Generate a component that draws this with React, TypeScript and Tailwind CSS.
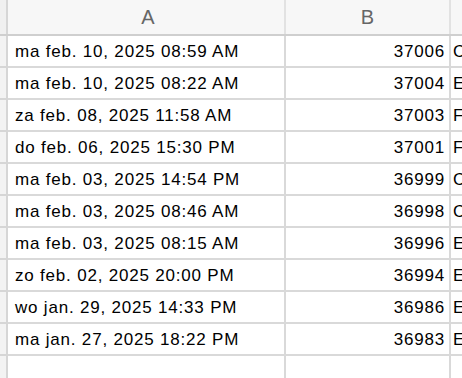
const rows: [string, number, string][] = [
  ["ma feb. 10, 2025 08:59 AM", 37006, "C"],
  ["ma feb. 10, 2025 08:22 AM", 37004, "E"],
  ["za feb. 08, 2025 11:58 AM", 37003, "F"],
  ["do feb. 06, 2025 15:30 PM", 37001, "F"],
  ["ma feb. 03, 2025 14:54 PM", 36999, "C"],
  ["ma feb. 03, 2025 08:46 AM", 36998, "C"],
  ["ma feb. 03, 2025 08:15 AM", 36996, "E"],
  ["zo feb. 02, 2025 20:00 PM", 36994, "E"],
  ["wo jan. 29, 2025 14:33 PM", 36986, "E"],
  ["ma jan. 27, 2025 18:22 PM", 36983, "E"],
];

const grid = "grid grid-cols-[8px_278px_165px_1fr]";

export default function App() {
  return (
    <div className="h-[378px] w-[462px] overflow-hidden bg-white font-['Liberation_Sans',Arial,sans-serif] text-[17px] tracking-[0.8px] text-black">
      <div className={`${grid} h-[36px] border-b-2 border-[#cfcfcf] bg-[#f7f7f7]`}>
        <div className="border-r-2 border-[#d6d6d6] bg-[#f0f0f0]" />
        <div className="flex items-center justify-center border-r-2 border-[#e2e2e2] pl-[4px] text-[20px] tracking-normal text-[#666]">
          A
        </div>
        <div className="flex items-center justify-center border-r-2 border-[#e2e2e2] text-[20px] tracking-normal text-[#666]">
          B
        </div>
        <div />
      </div>
      {rows.map(([date, id, c]) => (
        <div key={id} className={`${grid} h-[32px]`}>
          <div className="border-r-2 border-b-2 border-[#d6d6d6] bg-[#f3f3f3]" />
          <div className="flex items-center border-r-2 border-b-2 border-[#d9d9d9] pt-[2px] pl-[7px] whitespace-nowrap">
            {date}
          </div>
          <div className="flex items-center justify-end border-r-2 border-b-2 border-[#d9d9d9] pt-[2px] pr-[4px]">
            {id}
          </div>
          <div className="flex items-center overflow-hidden border-b-2 border-[#d9d9d9] pt-[2px] pl-[2px]">
            {c}
          </div>
        </div>
      ))}
      <div className={`${grid} h-[40px]`}>
        <div className="border-r-2 border-[#d6d6d6] bg-[#f3f3f3]" />
        <div className="border-r-2 border-[#d9d9d9]" />
        <div className="border-r-2 border-[#d9d9d9]" />
        <div />
      </div>
    </div>
  );
}
